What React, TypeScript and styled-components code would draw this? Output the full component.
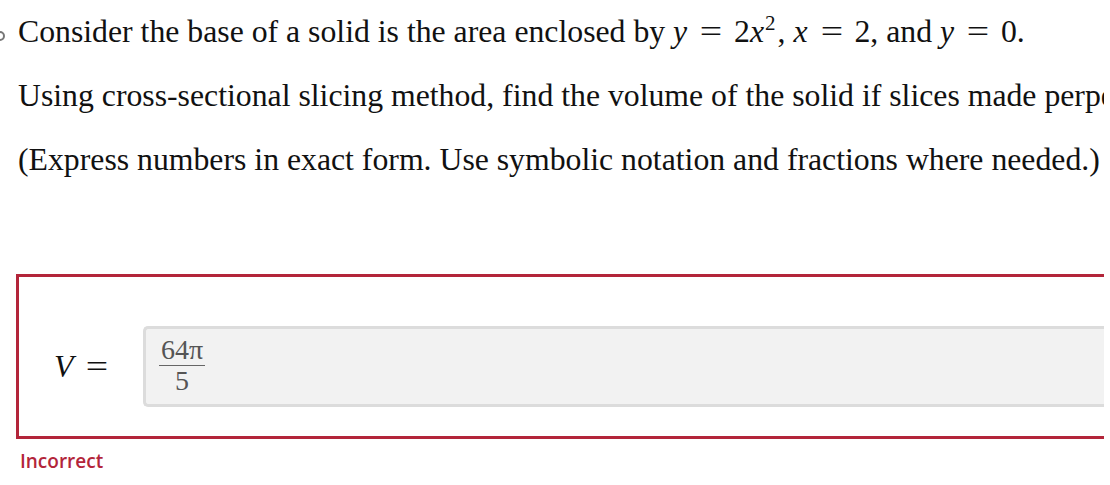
import React from 'react'
import styled, { createGlobalStyle } from 'styled-components'

const GlobalStyle = createGlobalStyle`
  html, body {
    margin: 0;
    padding: 0;
    background: #fff;
  }
`

const Page = styled.div`
  width: 1104px;
  height: 485px;
  overflow: hidden;
  position: relative;
  font-family: 'Liberation Serif', 'Times New Roman', serif;
  color: #111;
`

const Question = styled.div`
  padding: 0 0 0 18px;
  position: relative;
`

const Line = styled.p`
  margin: 0;
  font-size: 31.75px;
  line-height: 64px;
  white-space: nowrap;
`

const Var = styled.i`
  font-style: italic;
`

const Eq = styled.span`
  display: inline-block;
  margin: 0 14px 0 15px;
  transform: scaleX(1.25);
`

const Sup = styled.sup`
  font-size: 21px;
  line-height: 0;
  vertical-align: 0.55em;
  margin-left: 1px;
  margin-right: 2px;
`

const Bullet = styled.span`
  position: absolute;
  left: -5px;
  top: 31px;
  width: 6px;
  height: 6px;
  border: 2px solid #777;
  border-radius: 50%;
`

const AnswerBox = styled.div`
  margin: 82px 0 0 16px;
  border: 3px solid #b3253a;
  border-right: none;
  display: flex;
  align-items: flex-start;
  padding-top: 49px;
  height: 110px;
`

const Label = styled.div`
  width: 124px;
  padding-left: 35px;
  box-sizing: border-box;
  font-size: 31.75px;
  line-height: 81px;
  white-space: nowrap;
`

const Input = styled.div`
  flex: 1;
  height: 81px;
  box-sizing: border-box;
  background: #f2f2f2;
  border: 3px solid #dcdcdc;
  border-right: none;
  border-radius: 5px 0 0 5px;
  display: flex;
  align-items: center;
  padding-left: 13px;
`

const Fraction = styled.span`
  display: inline-flex;
  flex-direction: column;
  align-items: center;
  color: #555;
  font-size: 28px;
  line-height: 27px;
  margin-top: -4px;
`

const Numerator = styled.span`
  padding: 0 2px 2px;
  border-bottom: 1.5px solid #666;
`

const Denominator = styled.span`
  padding-top: 1px;
`

const Feedback = styled.div`
  margin: 9px 0 0 20px;
  font-family: 'Open Sans', 'Liberation Sans', sans-serif;
  font-weight: 600;
  font-size: 19px;
  color: #b3253a;
`

export default function App() {
  return (
    <Page>
      <GlobalStyle />
      <Question>
        <Bullet />
        <Line>
          Consider the base of a solid is the area enclosed by <Var>y</Var>
          <Eq>=</Eq>2<Var>x</Var>
          <Sup>2</Sup>, <Var>x</Var>
          <Eq>=</Eq>2, and <Var>y</Var>
          <Eq>=</Eq>0.
        </Line>
        <Line>
          Using cross-sectional slicing method, find the volume of the solid if slices made perpendicular to the x-axis are semicircles.
        </Line>
        <Line>(Express numbers in exact form. Use symbolic notation and fractions where needed.)</Line>
      </Question>
      <AnswerBox>
        <Label>
          <Var>V</Var>
          <Eq>=</Eq>
        </Label>
        <Input>
          <Fraction>
            <Numerator>64π</Numerator>
            <Denominator>5</Denominator>
          </Fraction>
        </Input>
      </AnswerBox>
      <Feedback>Incorrect</Feedback>
    </Page>
  )
}
